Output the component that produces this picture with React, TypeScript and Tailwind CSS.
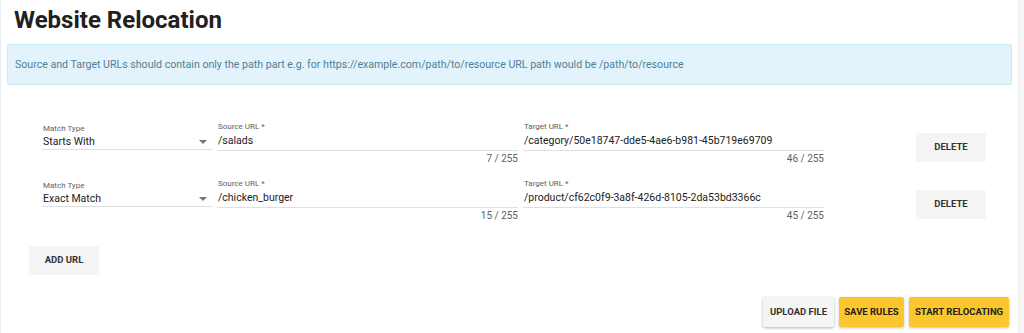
import React from 'react';

interface RuleRowProps
{
  matchType: string;
  source: string;
  target: string;
}

const RuleRow: React.FC<RuleRowProps> = ({ matchType, source, target }) =>
{
  return (
    <div className="flex items-start h-[57px]">
      <div className="w-[171px] ml-[41px] flex flex-col">
        <span className="text-[8px] leading-[10px] text-[#616161] mt-[2px] pl-[1px]">Match Type</span>
        <div className="flex items-center justify-between h-[16px] border-b border-[#e0e0e0] pl-[1px] pr-[6px]">
          <span className="text-[10.5px] leading-[14px] text-[#212121]">{matchType}</span>
          <svg width="8" height="4" viewBox="0 0 8 4"><path d="M0 0 L8 0 L4 4 Z" fill="#757575" /></svg>
        </div>
      </div>
      <div className="w-[301px] ml-[4px] flex flex-col">
        <span className="text-[8px] leading-[10px] text-[#616161] pl-[1px]">Source URL *</span>
        <div className="flex items-center h-[19px] border-b border-[#e0e0e0] pl-[1px]">
          <span className="text-[10.5px] leading-[14px] text-[#212121]">{source}</span>
        </div>
        <span className="text-[10px] leading-[14px] text-[#616161] text-right mt-[1px]">{source.length} / 255</span>
      </div>
      <div className="w-[301px] ml-[5px] flex flex-col">
        <span className="text-[8px] leading-[10px] text-[#616161] pl-[1px]">Target URL *</span>
        <div className="flex items-center h-[19px] border-b border-[#e0e0e0] pl-[1px]">
          <span className="text-[10.5px] leading-[14px] text-[#212121]">{target}</span>
        </div>
        <span className="text-[10px] leading-[14px] text-[#616161] text-right mt-[1px]">{target.length} / 255</span>
      </div>
      <button className="ml-[92px] mt-[11px] w-[70px] h-[29px] bg-[#f5f5f5] rounded-[2px] text-[9.5px] font-bold text-[#333]">
        DELETE
      </button>
    </div>
  );
};

const App: React.FC = () =>
{
  return (
    <div className="w-[1024px] h-[333px] bg-[#f7f7f7] flex" style={{ fontFamily: 'Roboto, "Liberation Sans", sans-serif' }}>
      <div className="w-[1019px] h-full bg-white border-l border-[#e3eef2] border-r border-r-[#ececec] flex flex-col">
        <h1 className="text-[24px] leading-[30px] font-bold text-[#212121] ml-[13px] mt-[5px]">Website Relocation</h1>
        <div className="mx-[6px] mt-[9px] h-[41px] bg-[#e3f3fb] border border-[#c6ecf7] rounded-[2px] flex items-center pl-[7px]">
          <span className="text-[10.6px] text-[#4f7f99]">
            Source and Target URLs should contain only the path part e.g. for https://example.com/path/to/resource URL path would be /path/to/resource
          </span>
        </div>
        <div className="mt-[37px] flex flex-col">
          <RuleRow matchType="Starts With" source="/salads" target="/category/50e18747-dde5-4ae6-b981-45b719e69709" />
          <RuleRow matchType="Exact Match" source="/chicken_burger" target="/product/cf62c0f9-3a8f-426d-8105-2da53bd3366c" />
        </div>
        <div className="ml-[28px] mt-[10px]">
          <button className="w-[70px] h-[29px] bg-[#f5f5f5] rounded-[2px] text-[9.5px] font-bold text-[#333]">
            ADD URL
          </button>
        </div>
        <div className="flex justify-end gap-[5px] mr-[9px] mt-[22px]">
          <button className="w-[71px] h-[30px] bg-[#f5f5f5] rounded-[2px] shadow-[0_1px_3px_rgba(0,0,0,0.3)] text-[9.5px] font-bold text-[#333]">
            UPLOAD FILE
          </button>
          <button className="w-[65px] h-[30px] bg-[#fcc62d] rounded-[2px] shadow-[0_1px_3px_rgba(0,0,0,0.25)] text-[9.5px] font-bold text-[#222]">
            SAVE RULES
          </button>
          <button className="w-[100px] h-[30px] bg-[#fcc62d] rounded-[2px] shadow-[0_1px_3px_rgba(0,0,0,0.25)] text-[9.5px] font-bold text-[#222]">
            START RELOCATING
          </button>
        </div>
      </div>
    </div>
  );
};

export default App;
